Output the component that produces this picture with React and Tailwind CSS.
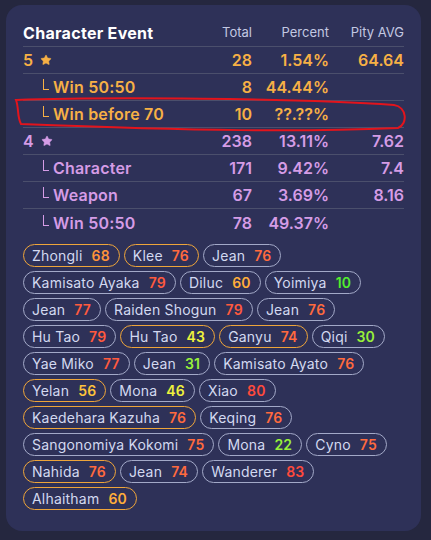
import { Star } from 'lucide-react';

const rows = [
  { label: '5', star: true, total: '28', percent: '1.54%', pity: '64.64', tone: 'text-[#f7b045]' },
  { label: 'Win 50:50', sub: true, total: '8', percent: '44.44%', pity: '', tone: 'text-[#f7b045]' },
  { label: 'Win before 70', sub: true, total: '10', percent: '??.??%', pity: '', tone: 'text-[#f7b045]' },
  { label: '4', star: true, total: '238', percent: '13.11%', pity: '7.62', tone: 'text-[#d59ce6]' },
  { label: 'Character', sub: true, total: '171', percent: '9.42%', pity: '7.4', tone: 'text-[#d59ce6]' },
  { label: 'Weapon', sub: true, total: '67', percent: '3.69%', pity: '8.16', tone: 'text-[#d59ce6]' },
  { label: 'Win 50:50', sub: true, total: '78', percent: '49.37%', pity: '', tone: 'text-[#d59ce6]', last: true },
];

const pulls = [
  ['Zhongli', 68, true], ['Klee', 76, true], ['Jean', 76],
  ['Kamisato Ayaka', 79], ['Diluc', 60], ['Yoimiya', 10],
  ['Jean', 77], ['Raiden Shogun', 79], ['Jean', 76],
  ['Hu Tao', 79], ['Hu Tao', 43, true], ['Ganyu', 74, true], ['Qiqi', 30],
  ['Yae Miko', 77], ['Jean', 31], ['Kamisato Ayato', 76],
  ['Yelan', 56, true], ['Mona', 46], ['Xiao', 80],
  ['Kaedehara Kazuha', 76, true], ['Keqing', 76],
  ['Sangonomiya Kokomi', 75], ['Mona', 22], ['Cyno', 75],
  ['Nahida', 76, true], ['Jean', 74], ['Wanderer', 83],
  ['Alhaitham', 60, true],
];

function pityColor(n) {
  if (n <= 15) return 'text-[#52ee2e]';
  if (n <= 32) return 'text-[#98f03a]';
  if (n <= 48) return 'text-[#eef23c]';
  if (n <= 57) return 'text-[#fcc23c]';
  if (n <= 62) return 'text-[#ffad3a]';
  if (n <= 70) return 'text-[#ff933a]';
  if (n <= 76) return 'text-[#ff6a3e]';
  if (n <= 79) return 'text-[#ff5a3e]';
  return 'text-[#ff4a3c]';
}

function StatRow({ row }) {
  return (
    <div
      className={`grid grid-cols-[1fr_60px_77px_75px] items-center h-[27px] font-semibold text-[16px] ${row.tone} ${row.last ? '' : 'border-b border-[#4b4f6c]'}`}
    >
      <div className="flex items-center">
        {row.sub && (
          <span className="ml-[20px] mr-[4px] mb-[5px] inline-block w-[6px] h-[11px] border-l-[1.5px] border-b-[1.5px] border-current" />
        )}
        <span className="tracking-[0.2px]">{row.label}</span>
        {row.star && <Star size={12} className="ml-[7px] fill-current" strokeWidth={1} />}
      </div>
      <div className="text-right">{row.total}</div>
      <div className="text-right">{row.percent}</div>
      <div className="text-right">{row.pity}</div>
    </div>
  );
}

function Chip({ name, pity, gold }) {
  return (
    <div
      className={`flex items-center gap-[9px] h-[23px] pl-[8px] pr-[9px] rounded-full border text-[14px] tracking-[0.2px] text-[#d3d9f0] ${gold ? 'border-[#eea53a]' : 'border-[#a3a9c8]'}`}
    >
      <span>{name}</span>
      <span className={`font-semibold ${pityColor(pity)}`}>{pity}</span>
    </div>
  );
}

export default function App() {
  return (
    <div className="relative min-h-[540px] bg-[#25273f] p-[5px_10px_11px_6px] font-['Inter','Liberation_Sans',sans-serif]">
      <div className="bg-[#2e3158] rounded-[16px] px-[17px] pt-[15px] pb-[21px]">
        <div className="grid grid-cols-[1fr_60px_77px_75px] items-center h-[27px] border-b border-[#4b4f6c]">
          <div className="text-white font-bold text-[16px] tracking-[0.3px]">Character Event</div>
          <div className="text-right text-[13px] text-[#c3c8e2]">Total</div>
          <div className="text-right text-[13px] text-[#c3c8e2]">Percent</div>
          <div className="text-right text-[13px] text-[#c3c8e2]">Pity AVG</div>
        </div>
        {rows.map((r, i) => (
          <StatRow key={i} row={r} />
        ))}
        <div className="mt-[8px] flex flex-wrap gap-[4px]">
          {pulls.map(([name, pity, gold], i) => (
            <Chip key={i} name={name} pity={pity} gold={gold} />
          ))}
        </div>
      </div>
      <svg className="absolute left-0 top-0 pointer-events-none" width="431" height="540">
        <path
          d="M16 100 C 100 97, 300 98, 394 105 C 407 107, 408 124, 398 128 C 300 132, 200 131, 21 124 C 17 117, 19 108, 16 100 Z"
          fill="none"
          stroke="#e3141c"
          strokeWidth="2"
        />
      </svg>
    </div>
  );
}
